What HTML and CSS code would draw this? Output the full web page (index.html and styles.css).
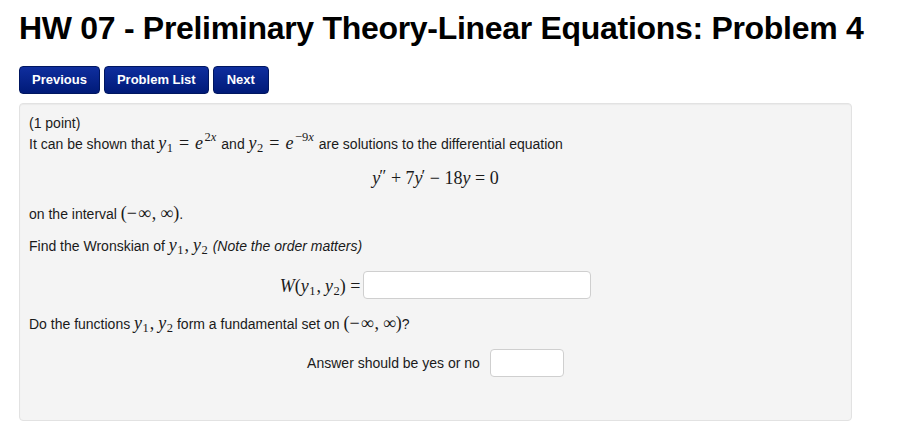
FILE: index.html
```html
<!DOCTYPE html>
<html>
<head>
<meta charset="utf-8">
<link rel="stylesheet" href="styles.css">
</head>
<body>
<h1 class="title">HW 07 - Preliminary Theory-Linear Equations: Problem 4</h1>
<div class="nav">
  <a class="btn">Previous</a>
  <a class="btn">Problem List</a>
  <a class="btn next">Next</a>
</div>
<div class="well">
  <div class="line">(1 point)</div>
  <div class="line">It can be shown that <span class="m"><i>y</i><span class="sub">1</span><span class="op wide-op">=</span><i>e</i><span class="sup">2<i>x</i></span></span> and <span class="m"><i>y</i><span class="sub">2</span><span class="op wide-op">=</span><i>e</i><span class="sup">−9<i>x</i></span></span> are solutions to the differential equation</div>
  <div class="display"><span class="m"><i>y</i><span class="pr">″</span><span class="op">+</span>7<i>y</i><span class="pr">′</span><span class="op">−</span>18<i>y</i><span class="op">=</span>0</span></div>
  <div class="line">on the interval <span class="m">(<span class="neg">−</span>∞<span class="comma">,</span>∞)</span>.</div>
  <div class="line gap">Find the Wronskian of <span class="m"><i>y</i><span class="sub">1</span><span class="comma">,</span><i>y</i><span class="sub">2</span></span> <em class="note">(Note the order matters)</em></div>
  <div class="row first-row">
    <span class="m label"><i>W</i>(<i>y</i><span class="sub">1</span><span class="comma">,</span><i>y</i><span class="sub">2</span>)<span class="op">=</span></span>
    <span class="input wide"></span>
  </div>
  <div class="line q">Do the functions <span class="m"><i>y</i><span class="sub">1</span><span class="comma">,</span><i>y</i><span class="sub">2</span></span> form a fundamental set on <span class="m">(<span class="neg">−</span>∞<span class="comma">,</span>∞)</span>?</div>
  <div class="row ans">
    <span class="ans-label">Answer should be yes or no</span>
    <span class="input small"></span>
  </div>
</div>
</body>
</html>
```
FILE: styles.css
```css
html, body {
  margin: 0;
  padding: 0;
  background: #fff;
}
body {
  padding: 0 19px;
  font-family: "Liberation Sans", Arial, sans-serif;
  color: #1a1a1a;
}
.title {
  margin: 10px 0 0 0;
  font-size: 32px;
  line-height: 36px;
  font-weight: bold;
  letter-spacing: -0.3px;
  white-space: nowrap;
  color: #000;
}
.nav {
  display: flex;
  gap: 4px;
  margin-top: 20px;
}
.btn {
  display: block;
  height: 26px;
  line-height: 26px;
  padding: 0 12px;
  font-size: 13px;
  font-weight: bold;
  letter-spacing: 0;
  color: #fff;
  background: linear-gradient(to bottom, #0f2e9e, #001a78);
  border: 1px solid #001660;
  border-radius: 4px;
}
.btn.next {
  padding: 0 13px;
}
.well {
  margin-top: 9px;
  width: 813px;
  height: 298px;
  padding: 9px;
  background: #f4f4f4;
  border: 1px solid #e2e2e2;
  border-radius: 4px;
  box-shadow: inset 0 1px 1px rgba(0,0,0,0.04);
  font-size: 14px;
  line-height: 20px;
}
.line {
  height: 20px;
  white-space: nowrap;
}
.m {
  font-family: "Liberation Serif", "Times New Roman", serif;
  font-size: 18px;
  line-height: 20px;
  font-style: normal;
  white-space: nowrap;
}
.m i {
  font-style: italic;
}
.sub {
  font-size: 12.5px;
  line-height: 0;
  vertical-align: -3px;
  margin-left: 0.5px;
}
.sup {
  font-size: 12.5px;
  line-height: 0;
  vertical-align: 8px;
  margin-left: 1.5px;
  margin-right: 1px;
}
.pr {
  font-size: 17px;
  line-height: 0;
  vertical-align: 3px;
  margin-left: -1px;
}
.op {
  margin: 0 4.5px;
}
.op.wide-op {
  margin: 0 6px;
}
.comma {
  margin: 0 4px 0 1px;
}
.neg {
  margin-right: 1px;
}
.display {
  margin: 15px 0;
  height: 20px;
  text-align: center;
}
.gap {
  margin-top: 12px;
}
.note {
  font-style: italic;
  margin-left: 1px;
}
.row {
  display: flex;
  justify-content: center;
  align-items: center;
  height: 28px;
}
.row .label {
  padding-top: 2px;
  margin-right: 0;
}
.label .op {
  margin-right: 3px;
}
.input {
  display: block;
  box-sizing: border-box;
  height: 28px;
  background: #fff;
  border: 1px solid #cfcfcf;
  border-radius: 4px;
}
.wide {
  width: 228px;
}
.small {
  width: 74px;
}
.first-row {
  margin-top: 16px;
}
.line.q {
  margin-top: 14px;
}
.row.ans {
  margin-top: 16px;
}
.ans-label {
  margin-right: 10px;
}
```
